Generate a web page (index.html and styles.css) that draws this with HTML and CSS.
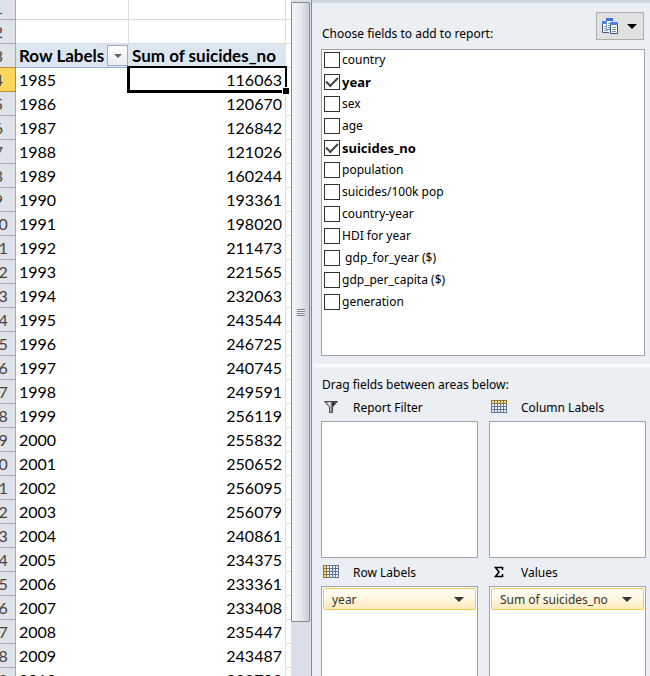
FILE: index.html
```html
<!DOCTYPE html>
<html lang="en">

<head>
    <meta charset="UTF-8">
    <meta name="viewport" content="width=device-width, initial-scale=1.0">
    <title>PivotTable Field List</title>
    <link rel="stylesheet" href="styles.css">
</head>

<body>
    <div class="app">
        <div class="sheet">
            <table class="grid">
                <tbody>
                    <tr><th>1</th><td class="line"></td><td class="line num"></td><td class="line"></td></tr>
                    <tr><th>2</th><td class="line"></td><td class="line num"></td><td class="line"></td></tr>
                    <tr class="head">
                        <th>3</th>
                        <td>
                            <div class="head-cell">
                                <span>Row Labels</span>
                                <button class="filter" type="button" aria-label="Filter row labels"><i class="arrow small"></i></button>
                            </div>
                        </td>
                        <td class="num">Sum of suicides_no</td>
                        <td class="line"></td>
                    </tr>
                    <tr class="current"><th>4</th><td>1985</td><td class="num active">116063</td><td class="line"></td></tr>
                    <tr><th>5</th><td>1986</td><td class="num">120670</td><td class="line"></td></tr>
                    <tr><th>6</th><td>1987</td><td class="num">126842</td><td class="line"></td></tr>
                    <tr><th>7</th><td>1988</td><td class="num">121026</td><td class="line"></td></tr>
                    <tr><th>8</th><td>1989</td><td class="num">160244</td><td class="line"></td></tr>
                    <tr><th>9</th><td>1990</td><td class="num">193361</td><td class="line"></td></tr>
                    <tr><th>10</th><td>1991</td><td class="num">198020</td><td class="line"></td></tr>
                    <tr><th>11</th><td>1992</td><td class="num">211473</td><td class="line"></td></tr>
                    <tr><th>12</th><td>1993</td><td class="num">221565</td><td class="line"></td></tr>
                    <tr><th>13</th><td>1994</td><td class="num">232063</td><td class="line"></td></tr>
                    <tr><th>14</th><td>1995</td><td class="num">243544</td><td class="line"></td></tr>
                    <tr><th>15</th><td>1996</td><td class="num">246725</td><td class="line"></td></tr>
                    <tr><th>16</th><td>1997</td><td class="num">240745</td><td class="line"></td></tr>
                    <tr><th>17</th><td>1998</td><td class="num">249591</td><td class="line"></td></tr>
                    <tr><th>18</th><td>1999</td><td class="num">256119</td><td class="line"></td></tr>
                    <tr><th>19</th><td>2000</td><td class="num">255832</td><td class="line"></td></tr>
                    <tr><th>20</th><td>2001</td><td class="num">250652</td><td class="line"></td></tr>
                    <tr><th>21</th><td>2002</td><td class="num">256095</td><td class="line"></td></tr>
                    <tr><th>22</th><td>2003</td><td class="num">256079</td><td class="line"></td></tr>
                    <tr><th>23</th><td>2004</td><td class="num">240861</td><td class="line"></td></tr>
                    <tr><th>24</th><td>2005</td><td class="num">234375</td><td class="line"></td></tr>
                    <tr><th>25</th><td>2006</td><td class="num">233361</td><td class="line"></td></tr>
                    <tr><th>26</th><td>2007</td><td class="num">233408</td><td class="line"></td></tr>
                    <tr><th>27</th><td>2008</td><td class="num">235447</td><td class="line"></td></tr>
                    <tr><th>28</th><td>2009</td><td class="num">243487</td><td class="line"></td></tr>
                    <tr><th>29</th><td>2010</td><td class="num">238702</td><td class="line"></td></tr>
                </tbody>
            </table>
        </div>

        <div class="scrollbar">
            <div class="thumb"><i class="grip"></i></div>
        </div>

        <div class="pane">
            <div class="pane-head">
                <span>Choose fields to add to report:</span>
                <button class="layout-btn" type="button" aria-label="Field list layout">
                    <svg width="16" height="17" viewBox="0 0 16 17">
                        <rect x="0" y="3" width="7" height="11" fill="#fff"/>
                        <rect x="0" y="3" width="7" height="3" fill="#4d82e0"/>
                        <path d="M.5 6v8.500h6.500" fill="none" stroke="#3c5c85"/>
                        <path d="M2 8.500h4M2 10.500h4M2 12.500h4" stroke="#8fa0b8"/>
                        <rect x="4" y="0" width="7" height="12" fill="#fff"/>
                        <rect x="4" y="0" width="7" height="3" fill="#3f74dc"/>
                        <path d="M4.500 3v8.500h6V3" fill="none" stroke="#7f98bd"/>
                        <path d="M6 5.500h4M6 7.500h4M6 9.500h3" stroke="#8fa0b8"/>
                        <rect x="8" y="4" width="8" height="12" fill="#fff"/>
                        <rect x="8" y="4" width="8" height="3" fill="#4d82e0"/>
                        <path d="M8.500 7v8.500h7V7" fill="none" stroke="#31517c"/>
                        <path d="M10 9.500h4M10 11.500h4M10 13.500h4" stroke="#7d90ab"/>
                    </svg>
                    <i class="arrow"></i>
                </button>
            </div>

            <div class="fields">
                <label class="field"><input type="checkbox">country</label>
                <label class="field"><input type="checkbox" checked>year</label>
                <label class="field"><input type="checkbox">sex</label>
                <label class="field"><input type="checkbox">age</label>
                <label class="field"><input type="checkbox" checked>suicides_no</label>
                <label class="field"><input type="checkbox">population</label>
                <label class="field"><input type="checkbox">suicides/100k pop</label>
                <label class="field"><input type="checkbox">country-year</label>
                <label class="field"><input type="checkbox">HDI for year</label>
                <label class="field"><input type="checkbox">&nbsp;gdp_for_year ($)</label>
                <label class="field"><input type="checkbox">gdp_per_capita ($)</label>
                <label class="field"><input type="checkbox">generation</label>
            </div>

            <div class="divider"></div>
            <p class="hint">Drag fields between areas below:</p>

            <div class="areas">
                <div class="area">
                    <div class="area-title">
                        <svg width="16" height="14" viewBox="0 0 16 14">
                            <defs>
                                <linearGradient id="funnel" x1="0" x2="1" y1="0" y2="0">
                                    <stop offset="0" stop-color="#555"/>
                                    <stop offset=".4" stop-color="#f4f4f4"/>
                                    <stop offset=".65" stop-color="#222"/>
                                    <stop offset="1" stop-color="#888"/>
                                </linearGradient>
                            </defs>
                            <path d="M1.500 1.500h13l-5 5.500v5.500h-3V7z" fill="url(#funnel)" stroke="#444"/>
                        </svg>
                        <span>Report Filter</span>
                    </div>
                    <div class="drop"></div>
                </div>
                <div class="area">
                    <div class="area-title">
                        <svg width="16" height="14" viewBox="0 0 16 14">
                            <rect width="16" height="13" fill="#5f7697"/>
                            <rect width="16" height="4" fill="#8f7436"/>
                            <path d="M1 1h2v2H1zM4 1h2v2H4zM7 1h2v2H7zM10 1h2v2h-2zM13 1h2v2h-2z" fill="#f6dc92"/>
                            <path d="M1 4h2v2H1zM4 4h2v2H4zM7 4h2v2H7zM10 4h2v2h-2zM13 4h2v2h-2zM1 7h2v2H1zM4 7h2v2H4zM7 7h2v2H7zM10 7h2v2h-2zM13 7h2v2h-2zM1 10h2v2H1zM4 10h2v2H4zM7 10h2v2H7zM10 10h2v2h-2zM13 10h2v2h-2z" fill="#eef4ff"/>
                        </svg>
                        <span>Column Labels</span>
                    </div>
                    <div class="drop"></div>
                </div>
                <div class="area">
                    <div class="area-title">
                        <svg width="16" height="14" viewBox="0 0 16 14">
                            <rect width="16" height="13" fill="#5f7697"/>
                            <rect width="4" height="13" fill="#8f7436"/>
                            <path d="M1 1h2v2H1zM1 4h2v2H1zM1 7h2v2H1zM1 10h2v2H1z" fill="#f6dc92"/>
                            <path d="M4 1h2v2H4zM7 1h2v2H7zM10 1h2v2h-2zM13 1h2v2h-2zM4 4h2v2H4zM7 4h2v2H7zM10 4h2v2h-2zM13 4h2v2h-2zM4 7h2v2H4zM7 7h2v2H7zM10 7h2v2h-2zM13 7h2v2h-2zM4 10h2v2H4zM7 10h2v2H7zM10 10h2v2h-2zM13 10h2v2h-2z" fill="#eef4ff"/>
                        </svg>
                        <span>Row Labels</span>
                    </div>
                    <div class="drop">
                        <button class="chip" type="button">year<i class="arrow"></i></button>
                    </div>
                </div>
                <div class="area">
                    <div class="area-title">
                        <svg width="16" height="14" viewBox="0 0 16 14">
                            <path d="M11.500 5V2.500h-7L8 7l-3.500 4.500h7V9" fill="none" stroke="#000" stroke-width="1.600"/>
                        </svg>
                        <span>Values</span>
                    </div>
                    <div class="drop">
                        <button class="chip" type="button">Sum of suicides_no<i class="arrow"></i></button>
                    </div>
                </div>
            </div>
        </div>
    </div>
</body>

</html>
```
FILE: styles.css
```css
* {
    padding: 0;
    margin: 0;
    box-sizing: border-box;
}

body {
    background-color: #ebeef3;
    font-family: "Noto Sans", "DejaVu Sans", sans-serif;
    font-size: 12px;
    color: #000;
}

.app {
    display: flex;
    height: 100vh;
    overflow: hidden;
}

/* worksheet */
.sheet {
    flex: none;
    width: 291px;
    overflow: hidden;
    background-color: #fff;
}

/* scrolled a little past the first row and the row numbers */
.grid {
    width: 309px;
    margin: -4px 0 0 -18px;
    table-layout: fixed;
    border-collapse: separate;
    border-spacing: 0;
    font-family: Lato, "Liberation Sans", sans-serif;
    font-size: 16px;
}

.grid th,
.grid td {
    height: 24px;
    line-height: 23px;
    border-bottom: 1px solid transparent;
    white-space: nowrap;
}

.grid th {
    width: 34px;
    background-color: #dfe2e7;
    border-right: 1px solid #a5aab1;
    border-bottom-color: #a5aab1;
    color: #444;
    font-weight: normal;
    text-align: center;
}

.grid td {
    width: 113px;
    padding-left: 3px;
    border-right: 1px solid transparent;
}

.grid td.num {
    width: 157px;
    padding-right: 3px;
    text-align: right;
    border-right-color: #dadcdd;
}

.grid td.line {
    border-right-color: #dadcdd;
    border-bottom-color: #dadcdd;
}

.grid td:last-child {
    width: auto;
    border-right: none;
}

.grid .head td:not(.line) {
    background-color: #dce6f1;
    border-bottom-color: #95b3d7;
    font-size: 17px;
    font-weight: bold;
}

.grid .head td.num {
    text-align: left;
    border-right-color: #dce6f1;
}

.grid .head th {
    border-bottom-color: #c0892f;
}

.grid .current th {
    background-color: #ffd65c;
    border-color: #c0892f;
}

.head-cell {
    display: flex;
    align-items: center;
    justify-content: space-between;
}

.filter {
    display: flex;
    align-items: center;
    justify-content: center;
    width: 21px;
    height: 21px;
    border: 1px solid #a3abb5;
    background: linear-gradient(#fff, #e9edf2);
}

.active {
    position: relative;
}

.active::before {
    content: "";
    position: absolute;
    top: -2px;
    right: -2px;
    bottom: -2px;
    left: -2px;
    border: 2px solid #000;
    border-left-width: 3px;
    border-bottom-width: 3px;
}

.active::after {
    content: "";
    position: absolute;
    right: -4px;
    bottom: -3px;
    width: 6px;
    height: 6px;
    border: 1px solid #fff;
    border-width: 1px 0 0 1px;
    background-color: #000;
}

.arrow {
    width: 0;
    height: 0;
    border: 5px solid transparent;
    border-top-color: currentColor;
    border-bottom: none;
}

.arrow.small {
    border-width: 4px 4px 0;
    color: #60656c;
}

/* scroll bar */
.scrollbar {
    flex: none;
    display: flex;
    width: 21px;
    padding: 2px 1px 54px 0;
    background-color: #d9dee7;
    border-right: 1px solid #868b93;
}

.thumb {
    flex: 1;
    display: flex;
    align-items: center;
    justify-content: center;
    border: 1px solid #858b96;
    border-radius: 1px;
    background: linear-gradient(to right, #f3f5f8, #e5e9ee 50%, #c9ced7);
}

.grip {
    width: 8px;
    height: 7px;
    background: repeating-linear-gradient(#7b818b 0 1px, #f3f5f8 1px 2px);
}

/* field list */
.pane {
    flex: 1;
    min-width: 0;
    display: flex;
    flex-direction: column;
    padding: 0 4px 0 9px;
    border-top: 3px solid #cdd6df;
}

.pane-head {
    display: flex;
    justify-content: space-between;
    height: 46px;
    padding: 9px 2px 0 1px;
}

.pane-head span {
    line-height: 44px;
}

.layout-btn {
    display: flex;
    align-items: center;
    justify-content: space-between;
    width: 48px;
    height: 28px;
    padding: 0 6px 0 5px;
    border: 1px solid #adadad;
    background-color: #e1e1e1;
    color: #000;
}

.fields {
    height: 307px;
    margin-right: 1px;
    padding: 0 2px;
    border: 1px solid #a0a3a9;
    background-color: #fff;
    overflow: auto;
}

.field {
    display: flex;
    align-items: center;
    gap: 2px;
    height: 22px;
    padding-bottom: 3px;
}

.field:has(:checked) {
    font-size: 13px;
    font-weight: bold;
}

.field input {
    appearance: none;
    display: grid;
    place-items: center;
    width: 16px;
    height: 16px;
    border: 1px solid #333;
    background-color: #fff;
}

.field input:checked::before {
    content: "";
    width: 10px;
    height: 5px;
    border: solid #444;
    border-width: 0 0 2px 2px;
    transform: translateY(-1px) rotate(-45deg);
}

.divider {
    height: 4px;
    margin: 8px -4px 0 -7px;
    background: linear-gradient(#fff, #f1f3f6);
}

.hint {
    padding: 8px 0 0 1px;
    line-height: 17px;
}

.areas {
    flex: 1;
    min-height: 0;
    display: grid;
    grid-template-columns: 1fr 1fr;
    grid-template-rows: 165px 1fr;
    gap: 0 11px;
}

.area {
    display: flex;
    flex-direction: column;
}

.area-title {
    display: flex;
    align-items: center;
    gap: 14px;
    height: 28px;
    padding-left: 2px;
}

.drop {
    flex: 1;
    padding: 1px;
    border: 1px solid #a0a3a9;
    background-color: #fff;
}

.area:nth-child(n+3) .drop {
    border-bottom: none;
}

.chip {
    display: flex;
    align-items: center;
    justify-content: space-between;
    width: 100%;
    height: 22px;
    padding: 0 11px 0 8px;
    border: 1px solid #efcb52;
    border-radius: 2px;
    background: linear-gradient(#fffdf6, #fff6df 50%, #ffebbb);
    font: inherit;
    color: #333;
}
```
